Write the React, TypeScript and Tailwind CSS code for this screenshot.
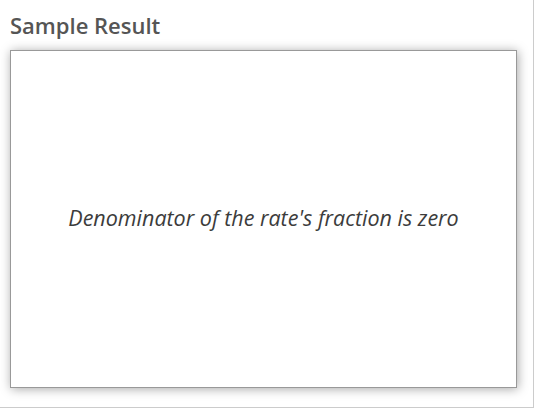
import React from 'react';

const App: React.FC = () => {
  return (
    <div className="w-[534px] h-[408px] bg-white border-r border-b border-[#cccccc] font-['Open_Sans',sans-serif]">
      <div className="pl-[10px] pt-[10px]">
        <h2 className="text-[22px] leading-[30px] font-semibold text-[#555555]">Sample Result</h2>
        <div className="mt-[10px] w-[507px] h-[338px] bg-white border border-[#999999] shadow-[1px_1px_10px_rgba(0,0,0,0.35)] flex items-center justify-center">
          <p className="text-[21.5px] italic text-[#3c3c3c] pb-[2px]">Denominator of the rate's fraction is zero</p>
        </div>
      </div>
    </div>
  );
};

export default App;
